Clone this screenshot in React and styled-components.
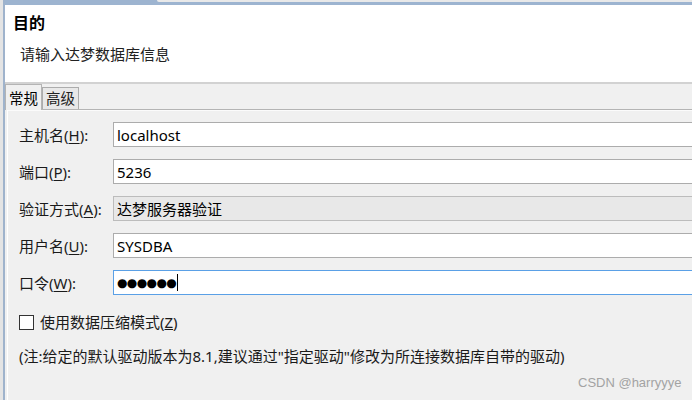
import React from 'react'
import styled, { createGlobalStyle, css } from 'styled-components'

const GlobalStyle = createGlobalStyle`
    html, body {
        margin:0;
        padding:0;
        background:#f0f0f0;
        overflow:hidden;
    }
    body {
        font-family:'Noto Sans', 'Noto Sans CJK SC', sans-serif;
        color:#1a1a1a;
    }
`

const RootStyle = styled.div`
    position:relative;
    width:720px;
    height:400px;
    display:flex;
    background:#f0f0f0;
`

const FrameEdge = styled.div`
    flex:0 0 3px;
    background:#e4e4e4;
    border-right:2px solid #9fb3cc;
`

const ContentStyle = styled.div`
    flex:1;
    display:flex;
    flex-direction:column;
`

const TopStrip = styled.div`
    position:relative;
    height:5px;
    background:#9db4d0;
`

const TopTabEdge = styled.div`
    position:absolute;
    left:152px;
    right:0;
    top:0;
    height:2px;
    background:#e9e9e9;
    border-bottom-left-radius:6px;
`

const HeaderStyle = styled.div`
    height:79px;
    box-sizing:border-box;
    padding:8px 0 0 8px;
    background:#fff;
    border-bottom:2px solid #d2d2d2;
`

const TitleStyle = styled.div`
    font-size:16px;
    font-weight:bold;
    line-height:20px;
    color:#000;
`

const SubtitleStyle = styled.div`
    margin-top:11px;
    padding-left:7px;
    font-size:15px;
    line-height:20px;
    color:#222;
`

const TabBar = styled.div`
    display:flex;
    align-items:flex-end;
    height:25px;
    position:relative;
    z-index:1;
`

const TabStyle = styled.div`
    box-sizing:border-box;
    height:22px;
    padding:0 3px;
    font-size:14.5px;
    line-height:21px;
    border:1px solid #acacac;
    border-bottom:none;
    background:#e8e8e8;
    color:#222;
    ${props => props.active && css`
        height:26px;
        background:#f0f0f0;
        border-color:#b4b4b4;
        margin-bottom:-1px;
        line-height:26px;
        color:#000;
    `}
`

const PanelStyle = styled.div`
    flex:1;
    margin-left:2px;
    border-top:1px solid #b4b4b4;
    border-left:1px solid #fff;
    box-shadow:inset 0 1px 0 #fbfbfb;
    padding:12px 0 0 11px;
    display:flex;
    flex-direction:column;
`

const FieldRow = styled.div`
    display:flex;
    align-items:center;
    height:25px;
    margin-bottom:12px;
`

const LabelStyle = styled.div`
    flex:0 0 94px;
    font-size:15px;
    line-height:20px;
    color:#1a1a1a;
    u {
        text-underline-offset:2px;
    }
`

const InputBox = styled.div`
    flex:1;
    height:25px;
    box-sizing:border-box;
    border:1px solid #acacac;
    background:#fff;
    padding:0 4px 0 3px;
    display:flex;
    align-items:center;
    font-size:15px;
    color:#000;
    ${props => props.disabled && css`
        background:#e8e8e8;
        border-color:#bcbcbc;
    `}
    ${props => props.focused && css`
        border-color:#5aa0e6;
    `}
`

const Dots = styled.span`
    font-family:'DejaVu Sans', sans-serif;
    font-size:12px;
    letter-spacing:-0.6px;
`

const Caret = styled.span`
    display:inline-block;
    width:1px;
    height:17px;
    margin-left:1px;
    background:#000;
`

const CheckRow = styled.div`
    display:flex;
    align-items:center;
    margin-top:5px;
    gap:6px;
    font-size:15px;
    line-height:20px;
`

const CheckBox = styled.div`
    width:13px;
    height:13px;
    border:1px solid #333;
    background:#fff;
`

const NoteStyle = styled.div`
    margin-top:14px;
    font-size:15px;
    line-height:20px;
    color:#1a1a1a;
    white-space:nowrap;
`

const Watermark = styled.div`
    position:absolute;
    left:578px;
    top:375px;
    font-family:'Liberation Sans', sans-serif;
    font-size:13px;
    color:#a3a3a3;
`

const fields = [
    { label: '主机名', key: 'H', value: 'localhost' },
    { label: '端口', key: 'P', value: '5236' },
    { label: '验证方式', key: 'A', value: '达梦服务器验证', disabled: true },
    { label: '用户名', key: 'U', value: 'SYSDBA' },
    { label: '口令', key: 'W', password: true },
]

const App = () => {
    return (
        <RootStyle>
            <GlobalStyle />
            <FrameEdge />
            <ContentStyle>
                <TopStrip>
                    <TopTabEdge />
                </TopStrip>
                <HeaderStyle>
                    <TitleStyle>目的</TitleStyle>
                    <SubtitleStyle>请输入达梦数据库信息</SubtitleStyle>
                </HeaderStyle>
                <TabBar>
                    <TabStyle active>常规</TabStyle>
                    <TabStyle>高级</TabStyle>
                </TabBar>
                <PanelStyle>
                    {
                        fields.map(f => (
                            <FieldRow key={f.key}>
                                <LabelStyle>{f.label}(<u>{f.key}</u>):</LabelStyle>
                                <InputBox disabled={f.disabled} focused={f.password}>
                                    {
                                        f.password ?
                                            <>
                                                <Dots>●●●●●●</Dots>
                                                <Caret />
                                            </>
                                            :
                                            f.value
                                    }
                                </InputBox>
                            </FieldRow>
                        ))
                    }
                    <CheckRow>
                        <CheckBox />
                        <span>使用数据压缩模式(<u>Z</u>)</span>
                    </CheckRow>
                    <NoteStyle>
                        (注:给定的默认驱动版本为8.1,建议通过"指定驱动"修改为所连接数据库自带的驱动)
                    </NoteStyle>
                </PanelStyle>
            </ContentStyle>
            <Watermark>CSDN @harryyye</Watermark>
        </RootStyle>
    )
}

export default App
